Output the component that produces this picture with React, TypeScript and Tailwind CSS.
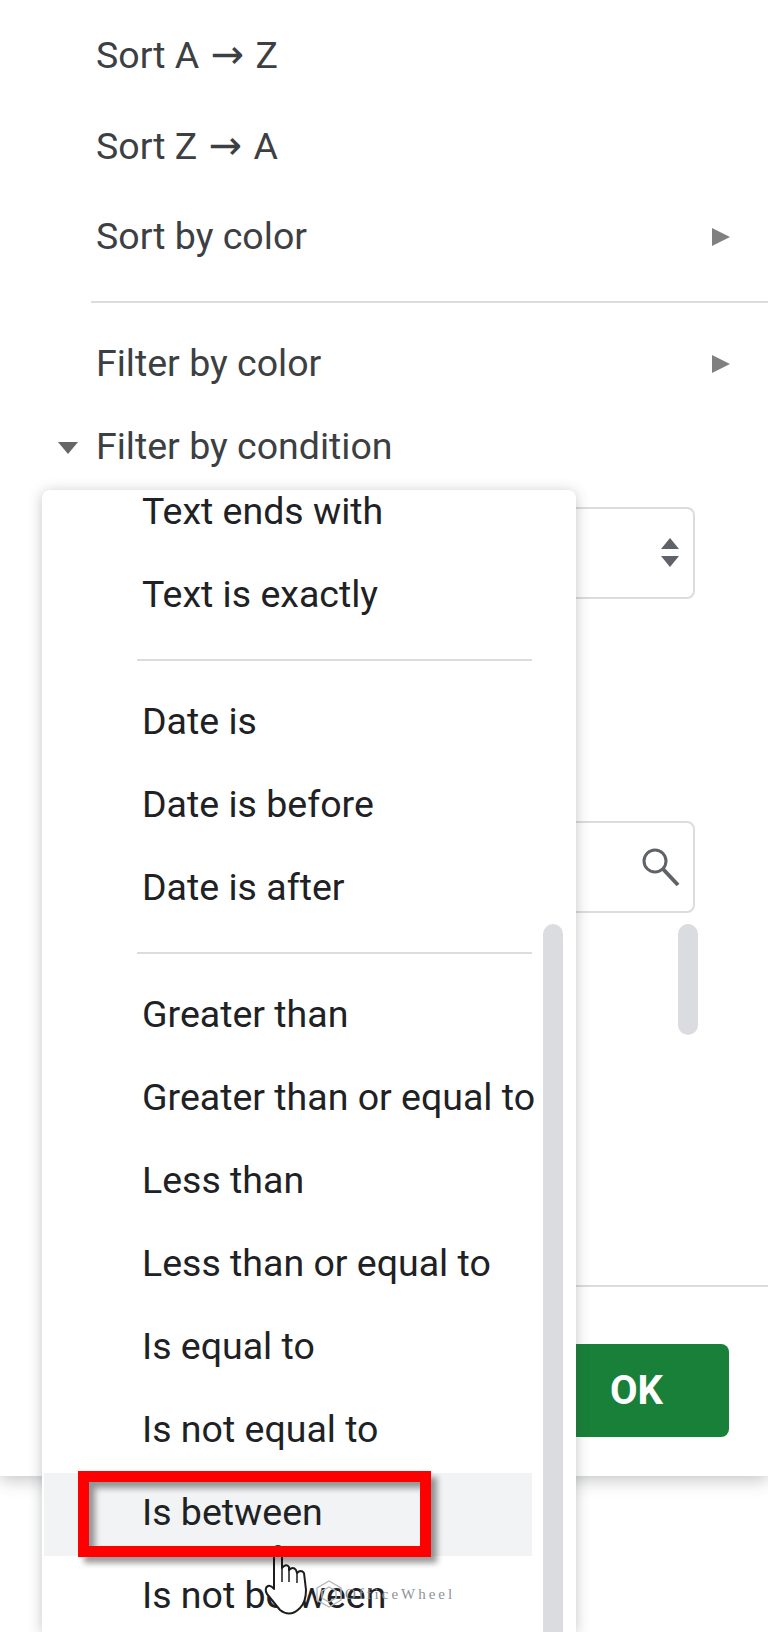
import type { ReactNode } from "react";

const rowText = "text-[37.5px] leading-none whitespace-nowrap";

function SideArrow() {
  return (
    <svg width="18" height="18" viewBox="0 0 18 18" className="mr-[38px]">
      <path d="M0 0 L18 9 L0 18 Z" fill="#808080" />
    </svg>
  );
}

function Arrow() {
  return <span className="font-['DejaVu_Sans',sans-serif] text-[40px] mx-[2px]">→</span>;
}

function Row({ label, arrow, h = "h-[91px]" }: { label: ReactNode; arrow?: boolean; h?: string }) {
  return (
    <div className={`${h} flex items-center justify-between pl-[96px] text-[#3c4043] ${rowText}`}>
      <span>{label}</span>
      {arrow && <SideArrow />}
    </div>
  );
}

function Item({ label, hover }: { label: string; hover?: boolean }) {
  return (
    <div className={`h-[83px] flex items-center pl-[98px] pb-[3px] text-[#202124] ${rowText} ${hover ? "bg-[#f1f3f4]" : ""}`}>
      {label}
    </div>
  );
}

function MenuLine() {
  return <div className="h-[2px] bg-[#dadce0] ml-[93px] mt-[21px] mb-[21px]" />;
}

function Hand() {
  return (
    <svg width="50" height="80" viewBox="0 0 50 80" className="absolute left-[262px] top-[1540px]">
      <path
        d="M12 8 Q16 4 20 8 L20 28 Q24 23 27 27 L27 30 Q31 26 34 30 L35 33 Q39 29 42 33 L44 50 Q44 62 38 68 Q28 78 18 70 L5 54 Q2 48 6 46 Q9 45 12 49 Z"
        fill="#fff"
        stroke="#1c1c1c"
        strokeWidth="2"
        strokeLinejoin="round"
      />
      <path d="M20 28 L20 42 M27 29 L27 42 M35 33 L35 43" stroke="#1c1c1c" strokeWidth="1.5" fill="none" />
    </svg>
  );
}

export default function App() {
  return (
    <div className="relative w-[768px] h-[1632px] overflow-hidden bg-white font-[Roboto,sans-serif]">
      {/* filter panel behind the open dropdown */}
      <div className="h-[1476px] flex flex-col bg-white pt-[9px] shadow-[0_4px_16px_rgba(60,64,67,0.3)]">
        <Row label={<>Sort A <Arrow /> Z</>} />
        <Row label={<>Sort Z <Arrow /> A</>} />
        <Row label="Sort by color" arrow />
        <div className="h-[2px] bg-[#dadce0] ml-[91px] mt-[19px] mb-[19px]" />
        <Row label="Filter by color" arrow h="h-[83px]" />
        <div className="relative">
          <svg width="20" height="12" viewBox="0 0 20 12" className="absolute left-[58px] top-[37px]">
            <path d="M0 0 H20 L10 12 Z" fill="#666" />
          </svg>
          <Row label="Filter by condition" h="h-[83px]" />
        </div>

        <div className="ml-[91px] mr-[73px] mt-[19px] h-[92px] border-2 border-[#dadce0] rounded-lg flex items-center justify-end pr-[14px]">
          <svg width="18" height="30" viewBox="0 0 18 30">
            <path d="M9 0 L18 11 H0 Z M0 18 H18 L9 29 Z" fill="#5f6368" />
          </svg>
        </div>

        <div className="ml-[91px] mr-[73px] mt-[222px] h-[92px] border-2 border-[#dadce0] rounded-lg flex items-center justify-end pr-[12px]">
          <svg width="40" height="40" viewBox="0 0 40 40" fill="none" stroke="#5f6368">
            <circle cx="14" cy="14" r="11" strokeWidth="3" />
            <path d="M22 22 L37 38" strokeWidth="4" />
          </svg>
        </div>

        <div className="mt-[11px] mr-[70px] flex justify-end">
          <div className="w-[20px] h-[111px] rounded-[10px] bg-[#dadce0]" />
        </div>

        <div className="mt-[250px] h-[2px] bg-[#dadce0] ml-[576px]" />
        <div className="flex justify-end pr-[39px] mt-[57px]">
          <div className="w-[180px] h-[93px] rounded-lg bg-[#188038] text-white text-[40px] font-bold flex items-center pl-[61px]">
            OK
          </div>
        </div>
      </div>

      {/* condition dropdown */}
      <div className="absolute left-[42px] top-[490px] w-[534px] h-[1142px] bg-white rounded-t-lg overflow-hidden shadow-[0_2px_14px_rgba(60,64,67,0.3)]">
        <div className="relative -mt-[18px] ml-[2px] w-[488px]">
          <Item label="Text ends with" />
          <Item label="Text is exactly" />
          <MenuLine />
          <Item label="Date is" />
          <Item label="Date is before" />
          <Item label="Date is after" />
          <MenuLine />
          <Item label="Greater than" />
          <Item label="Greater than or equal to" />
          <Item label="Less than" />
          <Item label="Less than or equal to" />
          <Item label="Is equal to" />
          <Item label="Is not equal to" />
          <Item label="Is between" hover />
          <Item label="Is not between" />
        </div>
        <div className="absolute left-[501px] top-[434px] w-[20px] h-[720px] rounded-t-[10px] bg-[#dadce0]" />
      </div>

      {/* annotation, pointer and watermark on top of the screenshot */}
      <div className="absolute left-[316px] top-[1580px] flex items-center gap-[3px] text-[#8d929a]">
        <svg width="26" height="28" viewBox="0 0 26 28" fill="none" stroke="#b4b8bd" strokeWidth="1.4">
          <path d="M13 1 L25 8 V20 L13 27 L1 20 V8 Z M13 7 L20 11 V18 L13 22 L6 18 V11 Z" />
        </svg>
        <span className="font-['Liberation_Serif',serif] text-[15px] tracking-[3px] leading-none">OfficeWheel</span>
      </div>
      <Hand />
      <div className="absolute left-[78px] top-[1471px] w-[353px] h-[86px] border-[11px] border-[#ff0000] shadow-[6px_6px_6px_rgba(0,0,0,0.4),inset_6px_6px_6px_rgba(0,0,0,0.4)]" />
    </div>
  );
}
